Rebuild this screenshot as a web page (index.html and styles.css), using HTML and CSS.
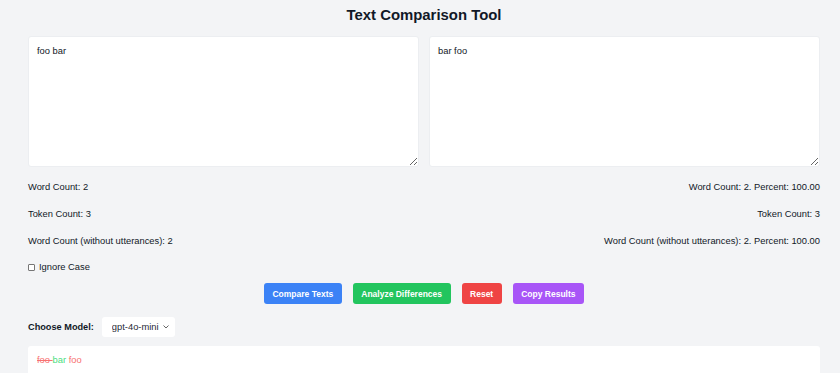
FILE: index.html
```html
<!DOCTYPE html>
<html lang="en">
<head>
  <meta charset="UTF-8">
  <title>Text Comparison Tool</title>
  <link rel="stylesheet" href="styles.css">
</head>
<body>
  <main class="app">
    <h1 class="title">Text Comparison Tool</h1>

    <div class="inputs">
      <textarea class="text-box">foo bar</textarea>
      <textarea class="text-box">bar foo</textarea>
    </div>

    <div class="stats">
      <div class="stats-row">
        <p>Word Count: 2</p>
        <p>Word Count: 2. Percent: 100.00</p>
      </div>
      <div class="stats-row">
        <p>Token Count: 3</p>
        <p>Token Count: 3</p>
      </div>
      <div class="stats-row">
        <p>Word Count (without utterances): 2</p>
        <p>Word Count (without utterances): 2. Percent: 100.00</p>
      </div>
    </div>

    <label class="check">
      <span class="check-box"></span> Ignore Case
    </label>

    <div class="actions">
      <button class="btn btn-blue">Compare Texts</button>
      <button class="btn btn-green">Analyze Differences</button>
      <button class="btn btn-red">Reset</button>
      <button class="btn btn-purple">Copy Results</button>
    </div>

    <div class="model">
      <label for="model">Choose Model:</label>
      <div class="select-wrap">
        <select id="model">
          <option>gpt-4o-mini</option>
          <option>gpt-4o</option>
        </select>
        <svg class="chevron" width="6" height="4" viewBox="0 0 6 4">
          <path d="M0.5 0.5 L3 3 L5.5 0.5" fill="none" stroke="#555" stroke-width="0.9"/>
        </svg>
      </div>
    </div>

    <div class="result">
      <span class="removed">foo </span><span class="added">bar</span><span class="same"> foo</span>
    </div>
  </main>
</body>
</html>
```

FILE: styles.css
```css
/* General Styles */
body {
  margin: 0;
  background-color: #f3f4f6;
  font-family: "Liberation Sans", Arial, sans-serif;
  font-size: 9.35px;
  color: #111827;
}

.app {
  padding: 0 20px 0 28px;
}

.title {
  margin: 0;
  padding-top: 6px;
  text-align: center;
  font-size: 14.9px;
  font-weight: bold;
  line-height: 19px;
}

.inputs {
  display: flex;
  gap: 10px;
  margin-top: 11px;
}

.text-box {
  flex: 1;
  height: 131px;
  box-sizing: border-box;
  padding: 9px 8px;
  border: 1px solid #eceef1;
  border-radius: 3px;
  background: white;
  font-family: inherit;
  font-size: 9.35px;
  color: #111827;
  resize: vertical;
  outline: none;
}

.stats {
  display: flex;
  flex-direction: column;
  gap: 13px;
  margin-top: 13px;
}

.stats-row {
  display: flex;
  justify-content: space-between;
}

.stats-row p {
  margin: 0;
  line-height: 14px;
}

.check {
  display: flex;
  align-items: center;
  gap: 4px;
  margin-top: 12px;
  line-height: 14px;
}

.check-box {
  width: 5px;
  height: 5px;
  border: 1px solid #767676;
  border-radius: 1px;
  background: white;
}

.actions {
  display: flex;
  justify-content: center;
  gap: 11px;
  margin-top: 9px;
}

.btn {
  height: 21px;
  padding: 0 8.5px;
  border: none;
  border-radius: 3px;
  color: white;
  font-family: inherit;
  font-size: 8.5px;
  font-weight: bold;
}

.btn-blue { background-color: #3b82f6; }
.btn-green { background-color: #22c55e; }
.btn-red { background-color: #ef4444; }
.btn-purple { background-color: #a855f7; }

.model {
  display: flex;
  align-items: center;
  gap: 8px;
  margin-top: 13px;
}

.model label {
  font-weight: bold;
  font-size: 9.2px;
}

.select-wrap {
  position: relative;
  display: flex;
}

.select-wrap select {
  width: 73px;
  height: 20px;
  padding: 0 0 0 10px;
  border: none;
  border-radius: 3px;
  background: white;
  font-family: inherit;
  font-size: 9.35px;
  color: #1f2937;
  appearance: none;
  -webkit-appearance: none;
}

.chevron {
  position: absolute;
  right: 6px;
  top: 8px;
  pointer-events: none;
}

.result {
  margin-top: 9px;
  padding: 9px;
  height: 40px;
  border-radius: 3px;
  background: white;
}

.removed {
  color: #f87171;
  text-decoration: line-through;
}

.added {
  color: #4ade80;
}

.same {
  color: #f87171;
}
```
